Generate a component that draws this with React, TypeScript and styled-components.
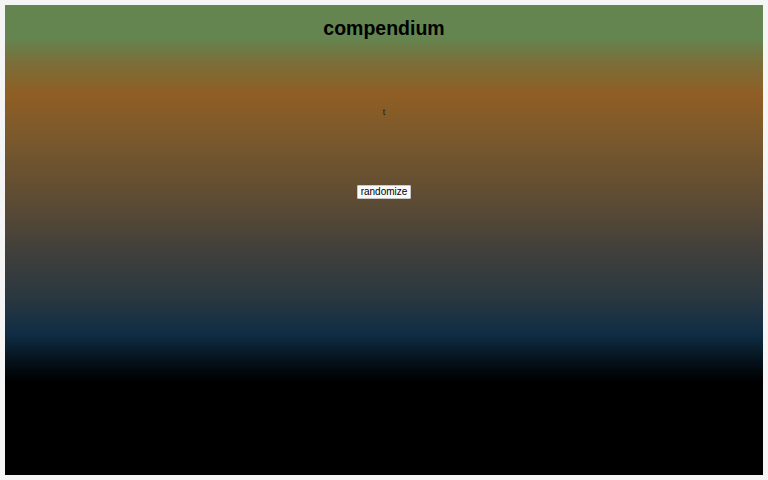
import React, { useState } from "react";
import styled, { createGlobalStyle } from "styled-components";

const GlobalStyle = createGlobalStyle`
  html, body {
    margin: 0;
    padding: 0;
    background: #f4f5f4;
  }
  body {
    font-family: "Liberation Sans", Arial, sans-serif;
  }
`;

const Page = styled.div`
  padding: 5px;
  height: 480px;
  box-sizing: border-box;
`;

const Panel = styled.div`
  height: 470px;
  box-sizing: border-box;
  display: flex;
  flex-direction: column;
  align-items: center;
  background: linear-gradient(
    to bottom,
    #648550 0%,
    #648550 7%,
    #7a6f3a 12%,
    #8f5e24 19%,
    #7d5a2c 27%,
    #5c4b34 42%,
    #3f3f3c 53%,
    #2b3840 62%,
    #0f2d45 70%,
    #061520 75%,
    #000000 80%,
    #000000 100%
  );
`;

const Title = styled.h1`
  margin: 12px 0 0;
  font-size: 19.5px;
  line-height: 23px;
  font-weight: bold;
  color: #000;
`;

const Word = styled.div`
  margin-top: 66px;
  font-size: 9px;
  line-height: 12px;
  color: #2a1a08;
`;

const Button = styled.button`
  margin-top: 67px;
  font-family: "Liberation Sans", Arial, sans-serif;
  font-size: 10px;
  line-height: 12px;
  padding: 0 3px;
  background: #fafafa;
  color: #000;
  border: 1px solid #c8c8c8;
  border-radius: 1px;
  cursor: pointer;
`;

const words = ["t", "a", "e", "o", "i", "n", "s"];

export default function App() {
  const [word, setWord] = useState("t");
  return (
    <>
      <GlobalStyle />
      <Page>
        <Panel>
          <Title>compendium</Title>
          <Word>{word}</Word>
          <Button onClick={() => setWord(words[Math.floor(Math.random() * words.length)])}>
            randomize
          </Button>
        </Panel>
      </Page>
    </>
  );
}
